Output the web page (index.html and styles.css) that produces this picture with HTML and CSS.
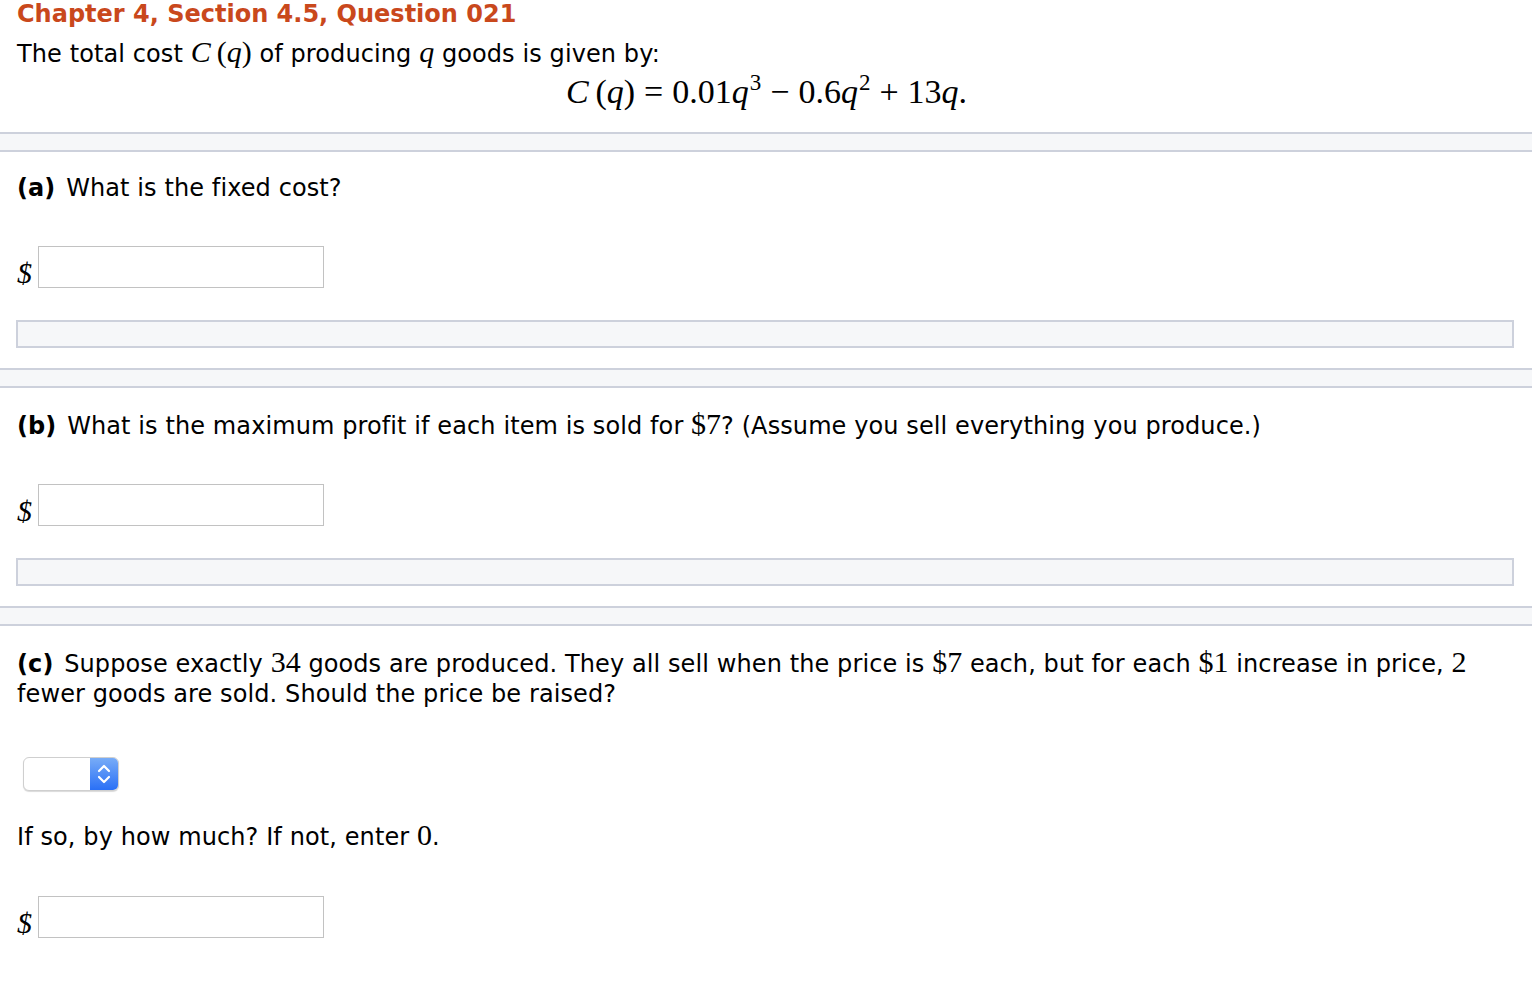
FILE: index.html
```html
<!DOCTYPE html>
<html lang="en">
<head>
<meta charset="utf-8">
<title>Chapter 4, Section 4.5, Question 021</title>
<link rel="stylesheet" href="styles.css">
</head>
<body>
<div class="page">
  <header class="head">
    <h1 class="title">Chapter 4, Section 4.5, Question 021</h1>
    <p class="text">The total cost <span class="m"><i>C</i>&#8201;(<i>q</i>)</span> of producing <span class="m"><i>q</i></span> goods is given by:</p>
    <div class="formula"><i>C</i>&#8201;(<i>q</i>)<span class="op">=</span>0.01<i>q</i><span class="sup">3</span><span class="op">−</span>0.6<i>q</i><span class="sup">2</span><span class="op">+</span>13<i>q</i>.</div>
  </header>

  <div class="band"></div>

  <section class="part">
    <p class="text"><b>(a)</b> What is the fixed cost?</p>
    <div class="answer">
      <span class="dollar">$</span>
      <input class="field" type="text" aria-label="fixed cost">
    </div>
    <div class="feedback"></div>
  </section>

  <div class="band"></div>

  <section class="part">
    <p class="text"><b>(b)</b> What is the maximum profit if each item is sold for <span class="m">$7</span>? (Assume you sell everything you produce.)</p>
    <div class="answer">
      <span class="dollar">$</span>
      <input class="field" type="text" aria-label="maximum profit">
    </div>
    <div class="feedback"></div>
  </section>

  <div class="band"></div>

  <section class="part">
    <p class="text"><b>(c)</b> Suppose exactly <span class="m">34</span> goods are produced. They all sell when the price is <span class="m">$7</span> each, but for each <span class="m">$1</span> increase in price, <span class="m">2</span> fewer goods are sold. Should the price be raised?</p>
    <div class="select-row">
      <div class="select">
        <span class="select-value"></span>
        <span class="select-btn">
          <svg width="16" height="24" viewBox="0 0 16 24" aria-hidden="true">
            <path d="M3 9 L8 4 L13 9" fill="none" stroke="#fff" stroke-width="2.2" stroke-linecap="round" stroke-linejoin="round"/>
            <path d="M3 15 L8 20 L13 15" fill="none" stroke="#fff" stroke-width="2.2" stroke-linecap="round" stroke-linejoin="round"/>
          </svg>
        </span>
      </div>
    </div>
    <p class="text">If so, by how much? If not, enter <span class="m">0</span>.</p>
    <div class="answer answer-last">
      <span class="dollar">$</span>
      <input class="field" type="text" aria-label="price increase">
    </div>
  </section>
</div>
</body>
</html>
```

FILE: styles.css
```css
html, body {
  margin: 0;
  padding: 0;
  background: #fff;
}

body {
  font-family: "DejaVu Sans", Verdana, sans-serif;
  font-size: 24px;
  line-height: 30px;
  letter-spacing: 0.1px;
  color: #000;
}

.page {
  display: flex;
  flex-direction: column;
}

.head {
  padding: 2px 16px 23px 17px;
}

.title {
  margin: 0;
  font-size: 24px;
  line-height: 24px;
  font-weight: bold;
  letter-spacing: 0;
  color: #c9481c;
}

.text {
  margin: 0;
}

.text b {
  margin-right: 3px;
}

.head .text {
  margin-top: 11px;
}

.m {
  font-family: "Liberation Serif", "Times New Roman", serif;
  font-size: 30px;
  line-height: 1;
  letter-spacing: 0;
}

.m i, .formula i {
  font-style: italic;
}

.formula {
  margin-top: 6px;
  text-align: center;
  font-family: "Liberation Serif", "Times New Roman", serif;
  font-size: 34px;
  line-height: 34px;
  letter-spacing: 0;
}

.op {
  margin: 0 9px;
}

.sup {
  font-size: 23px;
  line-height: 0;
  vertical-align: 13px;
  margin-left: 1px;
}

.band {
  height: 16px;
  border-top: 2px solid #cdd1dc;
  border-bottom: 2px solid #cdd1dc;
  background: #f6f7f9;
}

.part {
  padding: 21px 18px 20px 17px;
}

.answer {
  display: flex;
  align-items: flex-end;
  gap: 5px;
  margin-top: 43px;
}

.answer-last {
  margin-top: 44px;
}

.dollar {
  font-family: "Liberation Serif", "Times New Roman", serif;
  font-style: italic;
  font-size: 30px;
  line-height: 30px;
  width: 16px;
}

.field {
  box-sizing: border-box;
  width: 286px;
  height: 42px;
  margin: 0;
  border: 1px solid #c2c2c2;
  border-radius: 0;
  background: #fff;
  padding: 0 6px;
  font: inherit;
}

.feedback {
  box-sizing: border-box;
  height: 28px;
  margin-top: 32px;
  margin-left: -1px;
  border: 2px solid #cdd1dc;
  background: #f6f7f9;
}

.select-row {
  display: flex;
  margin-top: 48px;
  padding-left: 6px;
}

.select {
  box-sizing: border-box;
  display: flex;
  width: 96px;
  height: 34px;
  border: 1px solid #cfcfcf;
  border-radius: 6px;
  overflow: hidden;
  box-shadow: 0 1px 1px rgba(0, 0, 0, 0.15);
  background: #fff;
}

.select-value {
  flex: 1;
}

.select-btn {
  width: 28px;
  display: flex;
  align-items: center;
  justify-content: center;
  background: linear-gradient(#78acf7, #2a70f6);
}

.select-row + .text {
  margin-top: 29px;
}
```
